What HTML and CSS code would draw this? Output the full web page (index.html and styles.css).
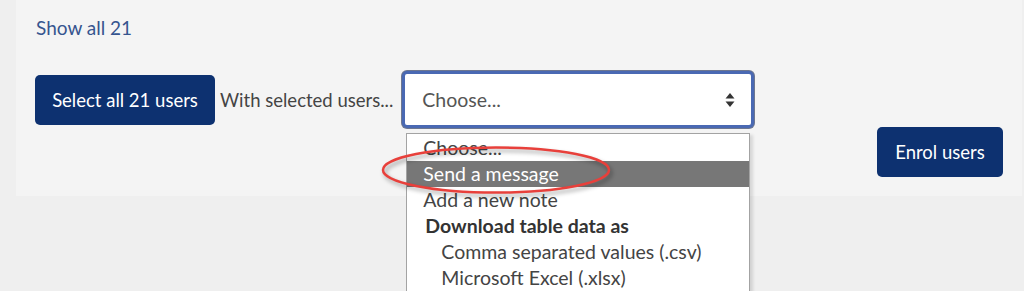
FILE: index.html
```html
<!DOCTYPE html>
<html lang="en">
<head>
    <meta charset="UTF-8">
    <meta name="viewport" content="width=device-width, initial-scale=1.0">
    <title>Participants - bulk actions</title>
    <link rel="stylesheet" href="styles.css">
</head>
<body>
    <div class="painel">
        <a class="link-mostrar" href="#">Show all 21</a>

        <div class="linha-acoes">
            <button class="btn-azul btn-selecionar">Select all 21 users</button>
            <span class="rotulo">With selected users...</span>
            <div class="select-wrap">
                <div class="select-falso">
                    <span>Choose...</span>
                    <svg class="setas" width="10" height="16" viewBox="0 0 10 16">
                        <path d="M5 1 L9.5 6.5 L0.5 6.5 Z" fill="#333"/>
                        <path d="M5 15 L9.5 9.5 L0.5 9.5 Z" fill="#333"/>
                    </svg>
                </div>

                <!-- lista aberta do select -->
                <ul class="lista-opcoes">
                    <li class="opcao">Choose...</li>
                    <li class="opcao ativa">Send a message</li>
                    <li class="opcao">Add a new note</li>
                    <li class="grupo">Download table data as</li>
                    <li class="opcao sub">Comma separated values (.csv)</li>
                    <li class="opcao sub">Microsoft Excel (.xlsx)</li>
                </ul>
            </div>
        </div>

        <div class="linha-rodape">
            <button class="btn-azul btn-enrol">Enrol users</button>
        </div>
    </div>

    <!-- marcação vermelha em volta de "Send a message" -->
    <svg class="destaque" width="240" height="60" viewBox="0 0 240 60">
        <ellipse cx="116" cy="26" rx="113" ry="22.5" fill="none" stroke="#e8403b" stroke-width="2.5"/>
    </svg>
</body>
</html>
```

FILE: styles.css
```css
body {
    margin: 0;
    background-color: #efefef;
    font-family: Lato, "Open Sans", sans-serif;
    height: 291px;
    overflow: hidden;
}

.painel {
    margin-left: 16px;
    width: 1006px;
    height: 196px;
    box-sizing: border-box;
    padding: 14px 19px 19px 19px;
    background-color: #f4f4f4;
}

.link-mostrar {
    display: block;
    margin-left: 1px;
    font-size: 19px;
    line-height: 28px;
    color: #36558f;
    text-decoration: none;
}

.linha-acoes {
    display: flex;
    align-items: center;
    margin-top: 29px;
    height: 57px;
}

.btn-azul {
    background-color: #0d3170;
    color: #fff;
    border: none;
    border-radius: 5px;
    font-family: inherit;
    font-size: 18.5px;
    height: 50px;
    padding: 0;
}

.btn-selecionar {
    width: 180px;
}

.rotulo {
    margin-left: 5px;
    font-size: 18.5px;
    color: #444;
}

.select-wrap {
    position: relative;
    margin-left: 9px;
}

.select-falso {
    width: 352px;
    height: 57px;
    box-sizing: border-box;
    border: 3px solid #4a69b3;
    box-shadow: 0 0 0 1px #6d7790;
    border-radius: 5px;
    background-color: #fff;
    display: flex;
    align-items: center;
    justify-content: space-between;
    padding: 0 16px 0 17px;
    font-size: 19.5px;
    color: #555;
}

.setas {
    display: block;
}

/* Lista aberta */
.lista-opcoes {
    position: absolute;
    left: 4px;
    top: 62px;
    width: 344px;
    box-sizing: border-box;
    margin: 0;
    padding: 1px 0 0 0;
    list-style: none;
    background-color: #fff;
    border: 1px solid #a3a3a3;
    box-shadow: 3px 2px 3px rgba(0,0,0,0.12);
    font-size: 19.5px;
    color: #444;
}

.opcao, .grupo {
    height: 26px;
    line-height: 26px;
    padding-left: 16px;
    white-space: nowrap;
}

.opcao.ativa {
    background-color: #777;
    color: #fff;
}

.grupo {
    font-weight: bold;
    padding-left: 18px;
    color: #333;
}

.opcao.sub {
    padding-left: 34px;
}

.linha-rodape {
    display: flex;
    justify-content: flex-end;
    margin-top: -1px;
}

.btn-enrol {
    width: 126px;
}

.destaque {
    position: absolute;
    left: 380px;
    top: 144px;
    filter: drop-shadow(2px 3px 2px rgba(0,0,0,0.35));
}
```
